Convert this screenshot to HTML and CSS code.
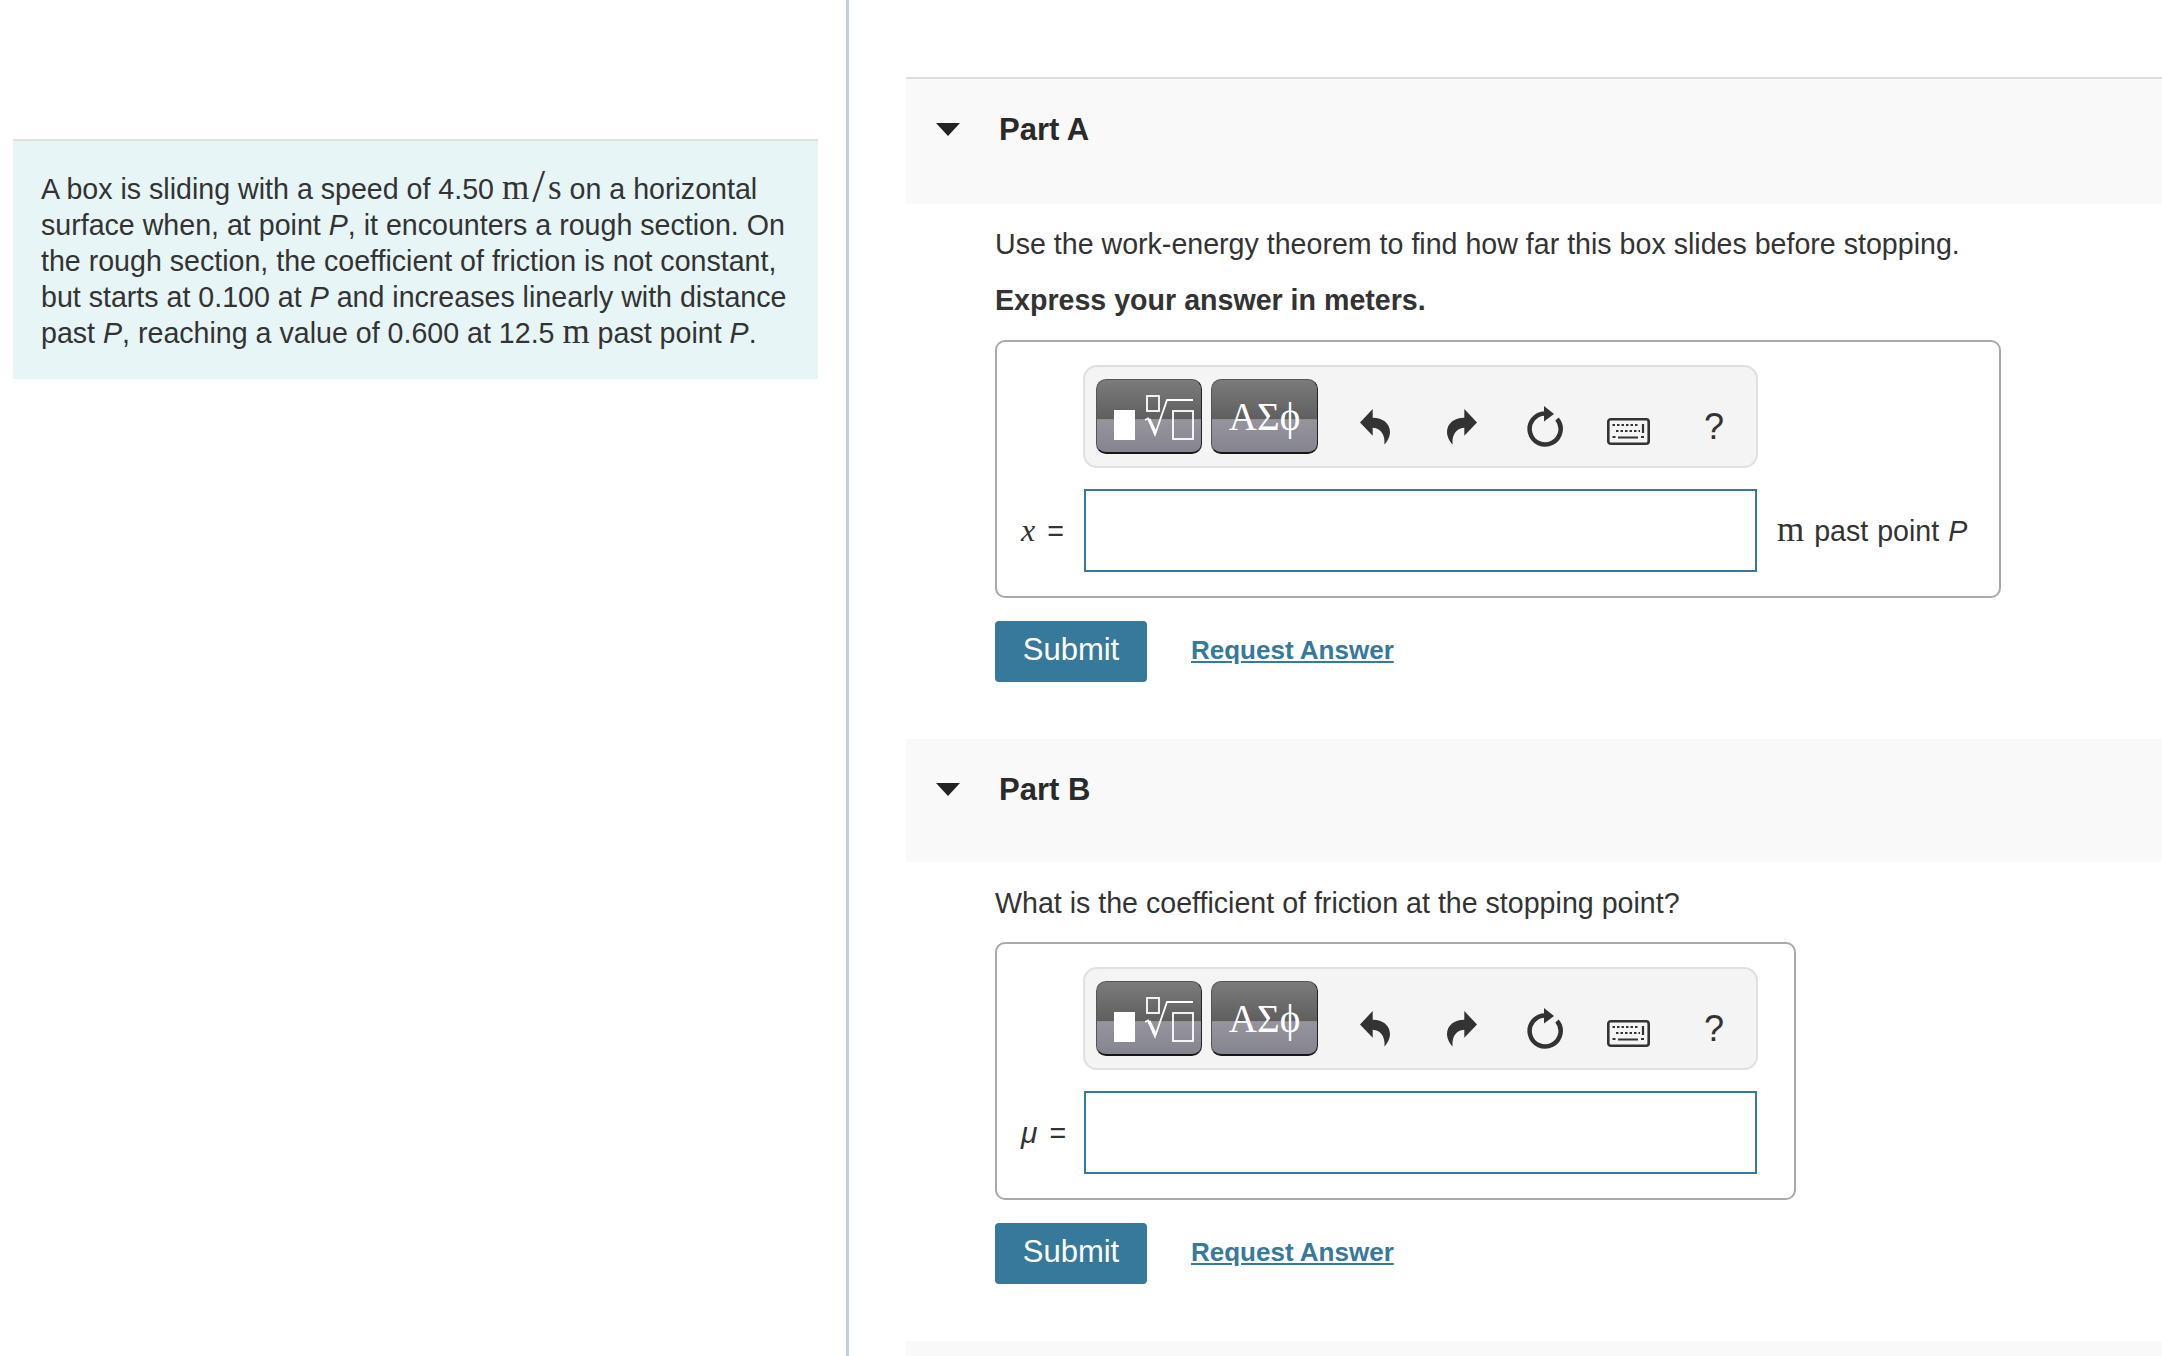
FILE: index.html
```html
<!DOCTYPE html>
<html lang="en">
<head>
    <meta charset="UTF-8">
    <meta name="viewport" content="width=device-width, initial-scale=1.0">
    <title>Part A and Part B</title>
    <link rel="stylesheet" href="styles.css">
</head>
<body>
    <svg class="icon-defs" width="0" height="0">
        <symbol id="icon-templates" viewBox="0 0 105 75">
            <rect x="18" y="31" width="21" height="30" fill="#fff"/>
            <g fill="none" stroke="#fff" stroke-width="1.8">
                <rect x="51" y="17" width="12" height="15"/>
                <path d="M49 41l3-1.500 7 16 12-34.500h26"/>
                <path d="M53 40l6.500 14" stroke-width="3"/>
                <rect x="77" y="32" width="20" height="28"/>
            </g>
        </symbol>
        <symbol id="icon-undo" viewBox="0 0 30 36">
            <path fill="#333" d="M0 13.500L12.700 0V8.700C22 8.500 30 14 30 23C30 28 27 33 24.300 35.500C25.500 28 22 19 12.700 18.700V26.700Z"/>
        </symbol>
        <symbol id="icon-reset" viewBox="0 0 36 41">
            <path fill="none" stroke="#333" stroke-width="4.500" d="M18 7.500A15.500 15.500 0 1 0 30 13"/>
            <path fill="#333" d="M17 0L27 8L17 15.500Z"/>
        </symbol>
        <symbol id="icon-keyboard" viewBox="0 0 43 27">
            <rect x="1.300" y="1.300" width="40.400" height="24.400" rx="2.500" fill="none" stroke="#333" stroke-width="2.600"/>
            <g fill="none" stroke="#333" stroke-width="2.200">
                <path d="M5.500 7h26" stroke-dasharray="2.500 2"/>
                <path d="M36 6v9"/>
                <path d="M9 13h24" stroke-dasharray="2.500 2"/>
                <path d="M5.500 19h3M11 19.500h20M34 19h3"/>
            </g>
        </symbol>
    </svg>

    <div class="page">
        <aside class="sidebar">
            <div class="problem">
                A box is sliding with a speed of 4.50 <span class="math">m<span class="slash">/</span>s</span> on a horizontal surface when, at point <i>P</i>, it encounters a rough section. On the rough section, the coefficient of friction is not constant, but starts at 0.100 at <i>P</i> and increases linearly with distance past <i>P</i>, reaching a value of 0.600 at 12.5 <span class="math">m</span> past point <i>P</i>.
            </div>
        </aside>

        <main class="parts">
            <section class="part part-first">
                <div class="part-head">
                    <span class="caret"></span>
                    <h2>Part A</h2>
                </div>
                <div class="part-body">
                    <p>Use the work-energy theorem to find how far this box slides before stopping.</p>
                    <p class="note">Express your answer in meters.</p>
                    <div class="answer-box answer-wide">
                        <div class="toolbar">
                            <div class="tool-btn"><svg width="105" height="75"><use href="#icon-templates"/></svg></div>
                            <div class="tool-btn tool-greek">ΑΣϕ</div>
                            <svg class="undo" width="30" height="36"><use href="#icon-undo"/></svg>
                            <svg class="redo" width="30" height="36"><use href="#icon-undo"/></svg>
                            <svg class="reset" width="36" height="41"><use href="#icon-reset"/></svg>
                            <svg class="keyboard" width="43" height="27"><use href="#icon-keyboard"/></svg>
                            <span class="help">?</span>
                        </div>
                        <div class="answer-row">
                            <label class="var"><i class="var-x">x</i> =</label>
                            <input class="answer-input" type="text">
                            <span class="units"><span class="math unit-m">m</span> past point <i>P</i></span>
                        </div>
                    </div>
                    <div class="actions">
                        <button class="submit">Submit</button>
                        <a class="request" href="#">Request Answer</a>
                    </div>
                </div>
            </section>

            <section class="part">
                <div class="part-head">
                    <span class="caret"></span>
                    <h2>Part B</h2>
                </div>
                <div class="part-body">
                    <p>What is the coefficient of friction at the stopping point?</p>
                    <div class="answer-box">
                        <div class="toolbar">
                            <div class="tool-btn"><svg width="105" height="75"><use href="#icon-templates"/></svg></div>
                            <div class="tool-btn tool-greek">ΑΣϕ</div>
                            <svg class="undo" width="30" height="36"><use href="#icon-undo"/></svg>
                            <svg class="redo" width="30" height="36"><use href="#icon-undo"/></svg>
                            <svg class="reset" width="36" height="41"><use href="#icon-reset"/></svg>
                            <svg class="keyboard" width="43" height="27"><use href="#icon-keyboard"/></svg>
                            <span class="help">?</span>
                        </div>
                        <div class="answer-row">
                            <label class="var"><i class="var-mu">μ</i> =</label>
                            <input class="answer-input" type="text">
                        </div>
                    </div>
                    <div class="actions">
                        <button class="submit">Submit</button>
                        <a class="request" href="#">Request Answer</a>
                    </div>
                </div>
            </section>

            <section class="part part-next"></section>
        </main>
    </div>
</body>
</html>
```

FILE: styles.css
```css
html, body {
    margin: 0;
    height: 100%;
    overflow: hidden;
}
body {
    font-family: "Liberation Sans", Arial, sans-serif;
    font-size: 28.6px;
    line-height: 36px;
    color: #333;
    background-color: #fff;
}
.icon-defs {
    position: absolute;
}
.page {
    display: flex;
    height: 1356px;
}
.sidebar {
    width: 849px;
    flex-shrink: 0;
    box-sizing: border-box;
    padding: 139px 28px 0 13px;
    border-right: 3px solid #c3d0dc;
}
.problem {
    padding: 30px 20px 28px 28px;
    background-color: #e7f5f6;
    border-top: 2px solid #e0e0e0;
}
.math {
    font-family: "Liberation Serif", serif;
    font-size: 35px;
    line-height: 0;
}
.slash {
    margin: 0 3px;
    font-size: 46px;
    line-height: 0;
    vertical-align: -3px;
}
.unit-m {
    margin-right: 1px;
}
.parts {
    flex: 1;
    padding: 77px 0 0 57px;
}
.part-head {
    display: flex;
    align-items: flex-start;
    gap: 39px;
    height: 123px;
    box-sizing: border-box;
    padding: 33px 0 0 30px;
    background-color: #f9f9f9;
}
.part-first .part-head {
    height: 127px;
    border-top: 2px solid #dedede;
}
.part-head h2 {
    margin: 0;
    font-size: 31px;
    line-height: 36px;
    color: #2a2a2a;
}
.caret {
    width: 0;
    height: 0;
    margin-top: 11px;
    border-left: 12.5px solid transparent;
    border-right: 12.5px solid transparent;
    border-top: 13px solid #222;
}
.part-body {
    padding: 23px 0 0 89px;
}
.part-first .part-body {
    padding-top: 22px;
}
.part-body p {
    margin: 0;
}
.part-body .note {
    margin-top: 20px;
    font-weight: bold;
}
.answer-box {
    width: 801px;
    height: 258px;
    box-sizing: border-box;
    margin-top: 21px;
    padding: 23px 0 0 24px;
    border: 2px solid #a9a9a9;
    border-radius: 10px;
}
.answer-wide {
    width: 1006px;
    margin-top: 22px;
}
.toolbar {
    display: flex;
    align-items: flex-start;
    width: 675px;
    height: 103px;
    box-sizing: border-box;
    margin-left: 62px;
    padding: 12px 0 0 11px;
    background-color: #f4f4f4;
    border: 2px solid #e0e0e0;
    border-radius: 14px;
}
.tool-btn {
    width: 106px;
    height: 75px;
    flex-shrink: 0;
    box-sizing: border-box;
    border: 1px solid #555;
    border-right-color: #222;
    border-bottom: 2px solid #161616;
    border-radius: 10px;
    background: linear-gradient(#7b7b7b, #5f5f5f 54%, #96959e 55%, #85858f);
    color: #fff;
}
.tool-btn svg {
    display: block;
    margin: -1px;
}
.tool-greek {
    width: 107px;
    margin-left: 9px;
    font-family: "Liberation Serif", serif;
    font-size: 39px;
    line-height: 74px;
    text-align: center;
}
.undo {
    margin: 30px 0 0 42px;
}
.redo {
    margin: 30px 0 0 57px;
    transform: scaleX(-1);
}
.reset {
    margin: 27px 0 0 50px;
}
.keyboard {
    margin: 39px 0 0 44px;
}
.help {
    margin: 30px 0 0 54px;
    font-size: 36px;
}
.answer-row {
    display: flex;
    align-items: center;
    margin-top: 21px;
}
.var {
    width: 63px;
    flex-shrink: 0;
    white-space: nowrap;
    word-spacing: 2px;
}
.var-x {
    margin-right: 2px;
    font-family: "Liberation Serif", serif;
    font-size: 32px;
}
.var-mu {
    margin-right: 2px;
    font-size: 30px;
}
.answer-input {
    width: 673px;
    height: 83px;
    box-sizing: border-box;
    border: 2px solid #37799b;
    background-color: #fff;
    padding: 0;
    outline: none;
}
.units {
    margin-left: 20px;
    white-space: nowrap;
    word-spacing: 1px;
}
.actions {
    display: flex;
    align-items: center;
    gap: 44px;
    margin: 23px 0 57px;
}
.submit {
    width: 152px;
    height: 61px;
    padding: 0 0 3px;
    font-family: inherit;
    font-size: 31px;
    color: white;
    background-color: #37799b;
    border: none;
    border-radius: 4px;
}
.request {
    margin-bottom: 4px;
    font-size: 26px;
    font-weight: bold;
    color: #37799b;
}
.part-next {
    height: 60px;
    background-color: #f9f9f9;
}
```
